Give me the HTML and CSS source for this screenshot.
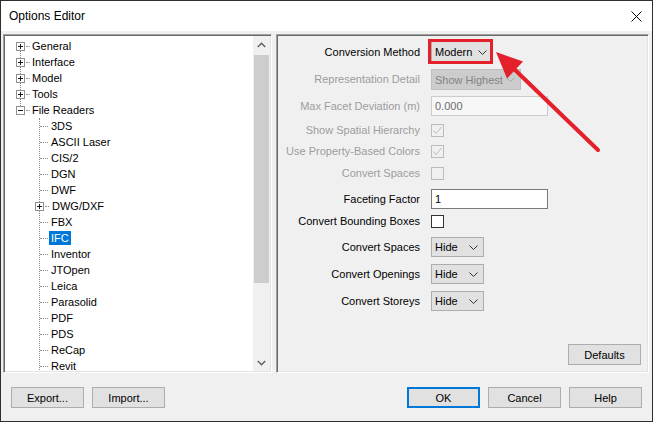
FILE: index.html
```html
<!DOCTYPE html>
<html lang="en">

<head>
    <meta charset="UTF-8">
    <title>Options Editor</title>
    <link rel="stylesheet" href="styles.css">
</head>

<body>

    <div class="window">
        <div class="titlebar">
            <span class="title">Options Editor</span>
            <svg class="close" width="11" height="11" viewBox="0 0 11 11">
                <path d="M0.5 0.5L10.5 10.5M10.5 0.5L0.5 10.5" stroke="#000" stroke-width="1" fill="none"/>
            </svg>
        </div>

        <div class="content">
            <div class="panels">

                <!-- Options tree -->
                <div class="tree-panel">
                    <div class="tree">
                        <div class="tree-root">
                            <div class="node"><span class="exp plus"></span><span class="stub"></span><span class="lbl">General</span></div>
                            <div class="node"><span class="exp plus"></span><span class="stub"></span><span class="lbl">Interface</span></div>
                            <div class="node"><span class="exp plus"></span><span class="stub"></span><span class="lbl">Model</span></div>
                            <div class="node"><span class="exp plus"></span><span class="stub"></span><span class="lbl">Tools</span></div>
                            <div class="node"><span class="exp"></span><span class="stub"></span><span class="lbl">File Readers</span></div>
                        </div>
                        <div class="tree-kids">
                            <div class="node"><span class="stub"></span><span class="lbl">3DS</span></div>
                            <div class="node"><span class="stub"></span><span class="lbl">ASCII Laser</span></div>
                            <div class="node"><span class="stub"></span><span class="lbl">CIS/2</span></div>
                            <div class="node"><span class="stub"></span><span class="lbl">DGN</span></div>
                            <div class="node"><span class="stub"></span><span class="lbl">DWF</span></div>
                            <div class="node has-kids"><span class="exp plus"></span><span class="stub"></span><span class="lbl">DWG/DXF</span></div>
                            <div class="node"><span class="stub"></span><span class="lbl">FBX</span></div>
                            <div class="node"><span class="stub"></span><span class="lbl sel">IFC</span></div>
                            <div class="node"><span class="stub"></span><span class="lbl">Inventor</span></div>
                            <div class="node"><span class="stub"></span><span class="lbl">JTOpen</span></div>
                            <div class="node"><span class="stub"></span><span class="lbl">Leica</span></div>
                            <div class="node"><span class="stub"></span><span class="lbl">Parasolid</span></div>
                            <div class="node"><span class="stub"></span><span class="lbl">PDF</span></div>
                            <div class="node"><span class="stub"></span><span class="lbl">PDS</span></div>
                            <div class="node"><span class="stub"></span><span class="lbl">ReCap</span></div>
                            <div class="node"><span class="stub"></span><span class="lbl">Revit</span></div>
                        </div>
                    </div>
                    <div class="scrollbar">
                        <div class="sb-btn">
                            <svg width="9" height="6" viewBox="0 0 9 6"><polyline points="0.8,5 4.5,1.3 8.2,5" stroke="#606060" stroke-width="1.5" fill="none"/></svg>
                        </div>
                        <div class="sb-track"><div class="sb-thumb"></div></div>
                        <div class="sb-btn">
                            <svg width="9" height="6" viewBox="0 0 9 6"><polyline points="0.8,1 4.5,4.7 8.2,1" stroke="#606060" stroke-width="1.5" fill="none"/></svg>
                        </div>
                    </div>
                </div>

                <!-- IFC reader settings -->
                <div class="form-panel">
                    <div class="form">
                        <div class="row first">
                            <label>Conversion Method</label>
                            <div class="select modern"><span>Modern</span>
                                <svg width="9" height="5" viewBox="0 0 9 5"><polyline points="0.5,0.5 4.5,4.5 8.5,0.5" stroke="#333" fill="none"/></svg>
                            </div>
                        </div>
                        <div class="row">
                            <label class="off">Representation Detail</label>
                            <div class="select wide disabled"><span>Show Highest</span>
                                <svg width="9" height="5" viewBox="0 0 9 5"><polyline points="0.5,0.5 4.5,4.5 8.5,0.5" stroke="#a6a6a6" fill="none"/></svg>
                            </div>
                        </div>
                        <div class="row">
                            <label class="off">Max Facet Deviation (m)</label>
                            <div class="field disabled">0.000</div>
                        </div>
                        <div class="row check">
                            <label class="off">Show Spatial Hierarchy</label>
                            <div class="cb disabled">
                                <svg width="11" height="11" viewBox="0 0 11 11"><polyline points="1.5,5.5 4,8.5 9.5,2" stroke="#bcbcbc" fill="none"/></svg>
                            </div>
                        </div>
                        <div class="row check">
                            <label class="off">Use Property-Based Colors</label>
                            <div class="cb disabled">
                                <svg width="11" height="11" viewBox="0 0 11 11"><polyline points="1.5,5.5 4,8.5 9.5,2" stroke="#bcbcbc" fill="none"/></svg>
                            </div>
                        </div>
                        <div class="row sep">
                            <label class="off">Convert Spaces</label>
                            <div class="cb disabled"></div>
                        </div>
                        <div class="row sep">
                            <label>Faceting Factor</label>
                            <div class="field">1</div>
                        </div>
                        <div class="row">
                            <label>Convert Bounding Boxes</label>
                            <div class="cb"></div>
                        </div>
                        <div class="row sep">
                            <label>Convert Spaces</label>
                            <div class="select"><span>Hide</span>
                                <svg width="9" height="5" viewBox="0 0 9 5"><polyline points="0.5,0.5 4.5,4.5 8.5,0.5" stroke="#333" fill="none"/></svg>
                            </div>
                        </div>
                        <div class="row loose">
                            <label>Convert Openings</label>
                            <div class="select"><span>Hide</span>
                                <svg width="9" height="5" viewBox="0 0 9 5"><polyline points="0.5,0.5 4.5,4.5 8.5,0.5" stroke="#333" fill="none"/></svg>
                            </div>
                        </div>
                        <div class="row loose">
                            <label>Convert Storeys</label>
                            <div class="select"><span>Hide</span>
                                <svg width="9" height="5" viewBox="0 0 9 5"><polyline points="0.5,0.5 4.5,4.5 8.5,0.5" stroke="#333" fill="none"/></svg>
                            </div>
                        </div>
                    </div>
                    <div class="panel-foot">
                        <button class="btn">Defaults</button>
                    </div>
                </div>
            </div>

            <div class="footer">
                <button class="btn">Export...</button>
                <button class="btn">Import...</button>
                <span class="spacer"></span>
                <button class="btn default">OK</button>
                <button class="btn">Cancel</button>
                <button class="btn">Help</button>
            </div>
        </div>

        <!-- red callout drawn over the dialog -->
        <svg class="annotation" width="653" height="422" viewBox="0 0 653 422">
            <rect x="429.5" y="40.5" width="62" height="22" fill="none" stroke="#e4202b" stroke-width="3"/>
            <line x1="598" y1="150" x2="512" y2="67" stroke="#e4202b" stroke-width="4" stroke-linecap="round"/>
            <polygon points="496,52 523,61.5 507,78.5" fill="#e4202b"/>
        </svg>
    </div>

</body>

</html>
```

FILE: styles.css
```css
body {
    margin: 0;
    font-family: "Liberation Sans", Arial, sans-serif;
    font-size: 11px;
    color: #000;
}

.window {
    position: relative;
    width: 653px;
    height: 422px;
    box-sizing: border-box;
    border: 1px solid #2e2e2e;
    background: #f0f0f0;
    display: flex;
    flex-direction: column;
}

.titlebar {
    height: 30px;
    flex: none;
    background: #fff;
    display: flex;
    align-items: center;
    padding: 0 10px 0 8px;
}

.title {
    flex: 1;
    font-size: 12px;
}

.content {
    flex: 1;
    display: flex;
    flex-direction: column;
    padding: 3px 3px 0 2px;
}

.panels {
    display: flex;
    gap: 4px;
    height: 339px;
}

/* sunken frame shared by both panels */
.tree-panel,
.form-panel {
    box-sizing: border-box;
    border: 1px solid;
    border-color: #a0a0a0 #fff #fff #a0a0a0;
    box-shadow: inset 1px 1px #696969, inset -1px -1px #e3e3e3;
    padding: 1px;
}

.tree-panel {
    width: 269px;
    background: #fff;
    display: flex;
}

.tree {
    flex: 1;
    overflow: hidden;
    padding-top: 2px;
}

.tree-root,
.tree-kids {
    position: relative;
}

.tree-root::before,
.tree-kids::before {
    content: "";
    position: absolute;
    border-left: 1px dotted #8c8c8c;
}

.tree-root::before {
    left: 15px;
    top: 8px;
    height: 64px;
}

.tree-kids::before {
    left: 34px;
    top: 0;
    bottom: -8px;
}

.node {
    height: 16px;
    display: flex;
    align-items: center;
    white-space: nowrap;
}

.tree-root .node {
    padding-left: 11px;
}

.tree-kids .node {
    padding-left: 35px;
}

.tree-kids .node.has-kids {
    padding-left: 30px;
}

.exp {
    position: relative;
    z-index: 1;
    flex: none;
    width: 9px;
    height: 9px;
    box-sizing: border-box;
    border: 1px solid #919191;
    background: #fff;
}

.exp::before {
    content: "";
    position: absolute;
    left: 1px;
    top: 3px;
    width: 5px;
    height: 1px;
    background: #1a1a1a;
}

.exp.plus::after {
    content: "";
    position: absolute;
    left: 3px;
    top: 1px;
    width: 1px;
    height: 5px;
    background: #1a1a1a;
}

.stub {
    flex: none;
    width: 4px;
    margin-left: 1px;
    border-top: 1px dotted #8c8c8c;
}

.tree-kids .stub {
    width: 8px;
    margin-left: 0;
}

.tree-kids .has-kids .stub {
    width: 4px;
    margin-left: 1px;
}

.lbl {
    padding: 1px 2px;
    line-height: 12px;
}

.tree-kids .lbl {
    margin-left: 1px;
}

.lbl.sel {
    background: #0078d7;
    color: #fff;
}

.scrollbar {
    width: 17px;
    flex: none;
    background: #f0f0f0;
    display: flex;
    flex-direction: column;
}

.sb-btn {
    height: 17px;
    display: flex;
    align-items: center;
    justify-content: center;
}

.sb-track {
    flex: 1;
    padding-top: 2px;
}

.sb-thumb {
    height: 228px;
    margin: 0 1px;
    background: #cdcdcd;
}

.form-panel {
    flex: 1;
    display: flex;
    flex-direction: column;
}

.row {
    display: flex;
    align-items: center;
    margin-top: 6px;
}

.row.first {
    margin-top: 5px;
}

.row.check {
    margin-top: 8px;
}

.row.sep {
    margin-top: 9px;
}

.row.loose {
    margin-top: 7px;
}

.row label {
    width: 142px;
    flex: none;
    margin-right: 11px;
    text-align: right;
    line-height: 13px;
    white-space: nowrap;
}

.row label.off {
    color: #9d9d9d;
}

.select {
    width: 53px;
    height: 20px;
    box-sizing: border-box;
    border: 1px solid #adadad;
    background: #e1e1e1;
    display: flex;
    align-items: center;
    justify-content: space-between;
    padding: 0 5px 0 3px;
}

.select.modern {
    width: 60px;
    height: 22px;
    padding-right: 3px;
}

.select.wide {
    width: 90px;
    height: 21px;
}

.select.disabled {
    background: #cccccc;
    border-color: #bfbfbf;
    color: #838383;
}

.field {
    width: 117px;
    height: 20px;
    box-sizing: border-box;
    border: 1px solid #7a7a7a;
    background: #fff;
    padding-left: 3px;
    line-height: 18px;
}

.field.disabled {
    border-color: #cccccc;
    background: #f7f7f7;
    color: #6d6d6d;
}

.cb {
    width: 13px;
    height: 13px;
    box-sizing: border-box;
    border: 1px solid #333;
    background: #fff;
}

.cb svg {
    display: block;
}

.cb.disabled {
    border-color: #bcbcbc;
    background: #f0f0f0;
}

.panel-foot {
    margin-top: auto;
    display: flex;
    justify-content: flex-end;
    padding: 0 6px 6px 0;
}

.btn {
    width: 73px;
    height: 21px;
    box-sizing: border-box;
    border: 1px solid #adadad;
    background: #e1e1e1;
    font-family: inherit;
    font-size: 11px;
    color: #000;
    padding: 0;
}

.btn.default {
    border: 2px solid #0078d7;
}

.footer {
    display: flex;
    gap: 8px;
    padding: 14px 7px 0 8px;
}

.spacer {
    flex: 1;
}

.annotation {
    position: absolute;
    left: -1px;
    top: -1px;
    pointer-events: none;
}
```
